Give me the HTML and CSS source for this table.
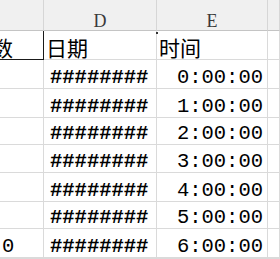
FILE: index.html
```html
<!DOCTYPE html>
<html lang="zh">
<head>
<meta charset="utf-8">
<link rel="stylesheet" href="styles.css">
</head>
<body>
<div class="sheet">
  <div class="cell hd"></div><div class="cell hd col">D</div><div class="cell hd col">E</div><div class="cell hd"></div>

  <div class="cell cjk active"><span class="cut">数</span></div><div class="cell cjk">日期</div><div class="cell cjk">时间</div><div class="cell"></div>

  <div class="cell"></div><div class="cell num hash">########</div><div class="cell num time">0:00:00</div><div class="cell"></div>
  <div class="cell"></div><div class="cell num hash">########</div><div class="cell num time">1:00:00</div><div class="cell"></div>
  <div class="cell"></div><div class="cell num hash">########</div><div class="cell num time">2:00:00</div><div class="cell"></div>
  <div class="cell"></div><div class="cell num hash">########</div><div class="cell num time">3:00:00</div><div class="cell"></div>
  <div class="cell"></div><div class="cell num hash">########</div><div class="cell num time">4:00:00</div><div class="cell"></div>
  <div class="cell"></div><div class="cell num hash">########</div><div class="cell num time">5:00:00</div><div class="cell"></div>
  <div class="cell num left">0</div><div class="cell num hash">########</div><div class="cell num time">6:00:00</div><div class="cell"></div>

  <div class="cell"></div><div class="cell"></div><div class="cell"></div><div class="cell"></div>
  <span class="dot"></span>
</div>
</body>
</html>
```

FILE: styles.css
```css
html, body {
  margin: 0;
  padding: 0;
  background: #ffffff;
}

.sheet {
  position: relative;
  width: 280px;
  height: 259px;
  overflow: hidden;
  display: grid;
  grid-template-columns: 44px 113px 111px 1fr;
  grid-template-rows: 31px 29px 29px 29px 27px 28px 29px 27px 29px 1fr;
  background: #ffffff;
}

.cell {
  box-sizing: border-box;
  border-right: 1px solid #dadada;
  border-bottom: 1px solid #dadada;
  display: flex;
  align-items: flex-end;
  white-space: nowrap;
  color: #000;
}

.hd {
  background: #f0f0f0;
  border-right-color: #d6d6d6;
  border-bottom-color: #c4c4c4;
}

.col {
  justify-content: center;
  font-family: "Liberation Serif", serif;
  font-size: 18px;
  line-height: 1;
  color: #3a3a3a;
}

.cjk {
  font-family: "Noto Sans CJK SC", sans-serif;
  font-size: 21px;
  line-height: 1;
  padding-left: 2px;
  padding-bottom: 1px;
}

.active {
  border-right-color: #1a1a1a;
  border-bottom-color: #1a1a1a;
  padding-left: 0;
}

.cut {
  margin-left: -8px;
}

.num {
  font-family: "Liberation Mono", monospace;
  font-size: 20.5px;
  line-height: 1;
}

.hash {
  padding-left: 6px;
  font-weight: bold;
}

.time {
  justify-content: flex-end;
  padding-right: 4px;
}

.left {
  padding-left: 2px;
}

.dot {
  position: absolute;
  left: 156px;
  top: 32px;
  width: 2px;
  height: 2px;
  background: #333;
}
```
